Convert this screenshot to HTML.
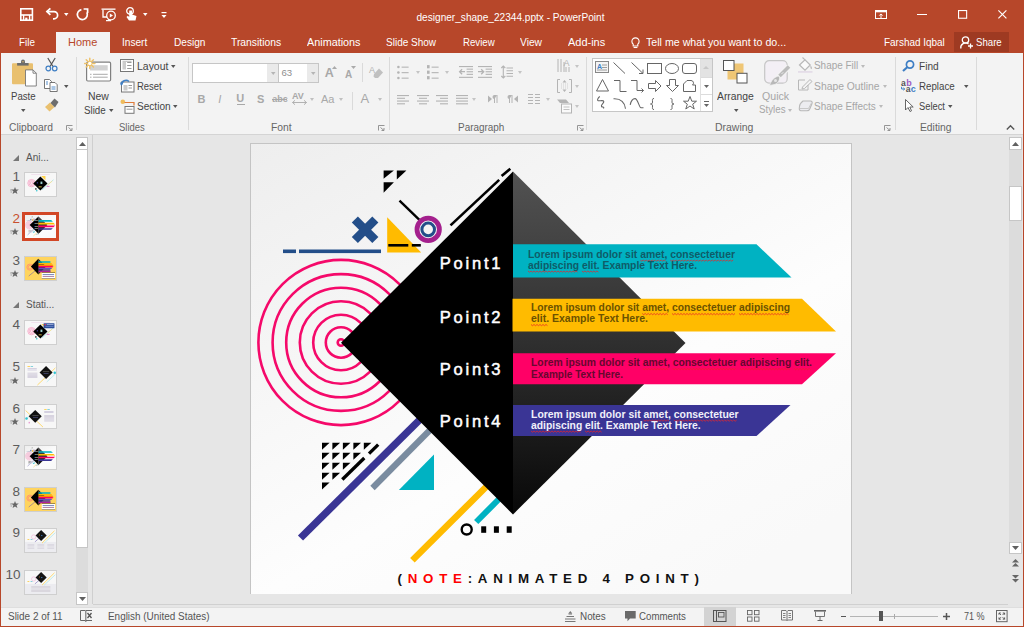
<!DOCTYPE html>
<html><head><meta charset="utf-8">
<style>
*{margin:0;padding:0;box-sizing:border-box}
html,body{width:1024px;height:627px;overflow:hidden;background:#e6e6e6;font-family:"Liberation Sans",sans-serif;position:relative}
.a{position:absolute}
.tx{white-space:nowrap}
svg{overflow:visible}
</style></head><body>
<div class="a" style="left:0px;top:0px;width:1024px;height:53px;background:#b7472a;"></div>
<div class="a tx" style="left:416.5px;top:12.36px;font-size:10.1px;line-height:11.28px;color:#fff;font-weight:normal;">designer_shape_22344.pptx - PowerPoint</div>
<svg class="a" style="left:20px;top:7.5px" width="13.5" height="13" viewBox="0 0 13.5 13"><rect x="0.8" y="0.8" width="11.6" height="11.4" fill="none" stroke="#fff" stroke-width="1.6"/><rect x="0.8" y="6.2" width="11.6" height="1.6" fill="#fff"/><path d="M3.6,7 V12 M9.6,7 V12" stroke="#fff" stroke-width="1.4"/><rect x="5.2" y="9.6" width="2.2" height="2.6" fill="#fff"/></svg>
<svg class="a" style="left:45.5px;top:8.2px" width="13" height="12" viewBox="0 0 13 12"><path d="M0.8,3.6 H8 A3.6,3.6 0 0 1 8,10.8 H7" fill="none" stroke="#fff" stroke-width="1.7"/><path d="M4.4,0.3 L0.9,3.6 L4.4,6.9" fill="none" stroke="#fff" stroke-width="1.7"/></svg>
<svg class="a" style="left:63.5px;top:12.5px" width="4.5" height="3" viewBox="0 0 4.5 3"><polygon points="0,0 4.5,0 2.25,3" fill="#fff"/></svg>
<svg class="a" style="left:76px;top:7.5px" width="13" height="12.5" viewBox="0 0 13 12.5"><path d="M5.4,1.6 A5,5 0 1 0 10.9,4.4" fill="none" stroke="#fff" stroke-width="1.7"/><path d="M7.6,1 H11.6 V5" fill="none" stroke="#fff" stroke-width="1.7"/></svg>
<svg class="a" style="left:101px;top:7.5px" width="16" height="14" viewBox="0 0 16 14"><rect x="0.5" y="0.5" width="14" height="1.3" fill="#fff"/><path d="M2,2 V9 H6" fill="none" stroke="#fff" stroke-width="1.3"/><circle cx="10" cy="7.5" r="4.3" fill="none" stroke="#fff" stroke-width="1.3"/><path d="M8.8,5.4 L12,7.5 L8.8,9.6 Z" fill="#fff"/><path d="M5,12.7 H10 M7.5,11 V13" stroke="#fff" stroke-width="1.2"/></svg>
<svg class="a" style="left:124.5px;top:7px" width="12" height="14" viewBox="0 0 12 14"><circle cx="5" cy="4" r="3.3" fill="none" stroke="#fff" stroke-width="1.3"/><path d="M4.2,3.5 V10 L2.8,8.8 L1.5,10 L4,13.5 H10.5 L11.5,9 L7,7.5 V3.5 Z" fill="#fff"/></svg>
<svg class="a" style="left:143px;top:12.5px" width="4.5" height="3" viewBox="0 0 4.5 3"><polygon points="0,0 4.5,0 2.25,3" fill="#fff"/></svg>
<svg class="a" style="left:160.5px;top:12px" width="6" height="7" viewBox="0 0 6 7"><rect x="0.5" y="0" width="5" height="1.2" fill="#fff"/><polygon points="0.5,3 5.5,3 3,6" fill="#fff"/></svg>
<svg class="a" style="left:875px;top:9.8px" width="12" height="9" viewBox="0 0 12 9"><rect x="0.5" y="0.5" width="11" height="8" fill="none" stroke="#fff" stroke-width="1"/><rect x="0.5" y="0.5" width="11" height="1.8" fill="#fff"/><path d="M6,8 V4 M4.3,5.6 L6,3.9 L7.7,5.6" fill="none" stroke="#fff" stroke-width="1"/></svg>
<div class="a" style="left:916.5px;top:13.6px;width:10.5px;height:1.1px;background:#fff;"></div>
<svg class="a" style="left:957.7px;top:9.8px" width="9.2" height="8.8" viewBox="0 0 9.2 8.8"><rect x="0.55" y="0.55" width="8.1" height="7.7" fill="none" stroke="#fff" stroke-width="1.1"/></svg>
<svg class="a" style="left:998.3px;top:9.8px" width="8.8" height="8.8" viewBox="0 0 8.8 8.8"><path d="M0.4,0.4 L8.4,8.4 M8.4,0.4 L0.4,8.4" stroke="#fff" stroke-width="1.15"/></svg>
<div class="a" style="left:56px;top:32px;width:53.5px;height:21px;background:#f3f3f3;"></div>
<div class="a tx" style="left:18.6px;top:36.98px;font-size:10.3px;line-height:11.51px;color:#fff;font-weight:normal;transform-origin:0 0;transform:scaleX(0.9582)">File</div>
<div class="a tx" style="left:67.9px;top:36.98px;font-size:10.3px;line-height:11.51px;color:#b7472a;font-weight:normal;transform-origin:0 0;transform:scaleX(1.0667)">Home</div>
<div class="a tx" style="left:122.4px;top:36.98px;font-size:10.3px;line-height:11.51px;color:#fff;font-weight:normal;transform-origin:0 0;transform:scaleX(0.9819)">Insert</div>
<div class="a tx" style="left:173.7px;top:36.98px;font-size:10.3px;line-height:11.51px;color:#fff;font-weight:normal;transform-origin:0 0;transform:scaleX(0.9825)">Design</div>
<div class="a tx" style="left:231.2px;top:36.98px;font-size:10.3px;line-height:11.51px;color:#fff;font-weight:normal;transform-origin:0 0;transform:scaleX(1.0023)">Transitions</div>
<div class="a tx" style="left:307.2px;top:36.98px;font-size:10.3px;line-height:11.51px;color:#fff;font-weight:normal;transform-origin:0 0;transform:scaleX(1.0503)">Animations</div>
<div class="a tx" style="left:386.4px;top:36.98px;font-size:10.3px;line-height:11.51px;color:#fff;font-weight:normal;transform-origin:0 0;transform:scaleX(0.9725)">Slide Show</div>
<div class="a tx" style="left:462.6px;top:36.98px;font-size:10.3px;line-height:11.51px;color:#fff;font-weight:normal;transform-origin:0 0;transform:scaleX(0.9388)">Review</div>
<div class="a tx" style="left:520px;top:36.98px;font-size:10.3px;line-height:11.51px;color:#fff;font-weight:normal;transform-origin:0 0;transform:scaleX(0.9936)">View</div>
<div class="a tx" style="left:567.8px;top:36.98px;font-size:10.3px;line-height:11.51px;color:#fff;font-weight:normal;transform-origin:0 0;transform:scaleX(1.0652)">Add-ins</div>
<svg class="a" style="left:631px;top:35.5px" width="9" height="13" viewBox="0 0 9 13"><path d="M2.2,8.2 A3.6,3.6 0 1 1 6.8,8.2 V10 H2.2 Z" fill="none" stroke="#fff" stroke-width="1.1"/><path d="M2.6,11.5 H6.4" stroke="#fff" stroke-width="1.1"/></svg>
<div class="a tx" style="left:646.4px;top:36.98px;font-size:10.3px;line-height:11.51px;color:#fff;font-weight:normal;transform-origin:0 0;transform:scaleX(1.0328)">Tell me what you want to do...</div>
<div class="a tx" style="left:883.5px;top:36.98px;font-size:10.3px;line-height:11.51px;color:#fff;font-weight:normal;transform-origin:0 0;transform:scaleX(0.9656)">Farshad Iqbal</div>
<div class="a" style="left:954px;top:31.6px;width:54.6px;height:20.5px;background:#9e3a22;"></div>
<svg class="a" style="left:960px;top:36px" width="14" height="13" viewBox="0 0 14 13"><circle cx="5.5" cy="4" r="3.2" fill="none" stroke="#fff" stroke-width="1.3"/><path d="M0.8,12.5 A4.8,4.8 0 0 1 8.5,8" fill="none" stroke="#fff" stroke-width="1.3"/><path d="M10.5,7.5 V12.5 M8,10 H13" stroke="#fff" stroke-width="1.3"/></svg>
<div class="a tx" style="left:976.2px;top:36.98px;font-size:10.3px;line-height:11.51px;color:#fff;font-weight:normal;transform-origin:0 0;transform:scaleX(0.9351)">Share</div>
<div class="a" style="left:0px;top:53px;width:1024px;height:81px;background:#f3f3f3;"></div>
<div class="a" style="left:0px;top:134px;width:1024px;height:1px;background:#d4d4d4;"></div>
<div class="a" style="left:0px;top:53px;width:1px;height:574px;background:#b7472a;"></div>
<div class="a" style="left:1022.5px;top:53px;width:1.5px;height:574px;background:#b7472a;"></div>
<div class="a" style="left:76px;top:57px;width:1px;height:73px;background:#dadada;"></div>
<div class="a" style="left:188px;top:57px;width:1px;height:73px;background:#dadada;"></div>
<div class="a" style="left:389px;top:57px;width:1px;height:73px;background:#dadada;"></div>
<div class="a" style="left:586px;top:57px;width:1px;height:73px;background:#dadada;"></div>
<div class="a" style="left:894.5px;top:57px;width:1px;height:73px;background:#dadada;"></div>
<div class="a" style="left:975.5px;top:57px;width:1px;height:73px;background:#dadada;"></div>
<div class="a tx" style="left:9.3px;top:121.55px;font-size:10px;line-height:11.17px;color:#666;font-weight:normal;transform-origin:0 0;transform:scaleX(1.0254)">Clipboard</div>
<svg class="a" style="left:66px;top:124.5px" width="7" height="6" viewBox="0 0 7 6"><path d="M0.5,5.5 V0.5 H6.5" fill="none" stroke="#8a8a8a" stroke-width="0.9"/><path d="M2.5,2.5 L6,5.5 M6,3 V5.5 H3.5" fill="none" stroke="#8a8a8a" stroke-width="0.9"/></svg>
<div class="a tx" style="left:119.3px;top:121.55px;font-size:10px;line-height:11.17px;color:#666;font-weight:normal;transform-origin:0 0;transform:scaleX(0.9468)">Slides</div>
<div class="a tx" style="left:270.8px;top:121.55px;font-size:10px;line-height:11.17px;color:#666;font-weight:normal;transform-origin:0 0;transform:scaleX(1.0342)">Font</div>
<svg class="a" style="left:378.3px;top:124.5px" width="7" height="6" viewBox="0 0 7 6"><path d="M0.5,5.5 V0.5 H6.5" fill="none" stroke="#8a8a8a" stroke-width="0.9"/><path d="M2.5,2.5 L6,5.5 M6,3 V5.5 H3.5" fill="none" stroke="#8a8a8a" stroke-width="0.9"/></svg>
<div class="a tx" style="left:458px;top:121.55px;font-size:10px;line-height:11.17px;color:#666;font-weight:normal;transform-origin:0 0;transform:scaleX(0.9935)">Paragraph</div>
<svg class="a" style="left:576.5px;top:124.5px" width="7" height="6" viewBox="0 0 7 6"><path d="M0.5,5.5 V0.5 H6.5" fill="none" stroke="#8a8a8a" stroke-width="0.9"/><path d="M2.5,2.5 L6,5.5 M6,3 V5.5 H3.5" fill="none" stroke="#8a8a8a" stroke-width="0.9"/></svg>
<div class="a tx" style="left:714.6px;top:121.55px;font-size:10px;line-height:11.17px;color:#666;font-weight:normal;transform-origin:0 0;transform:scaleX(1.0467)">Drawing</div>
<svg class="a" style="left:884.4px;top:124.5px" width="7" height="6" viewBox="0 0 7 6"><path d="M0.5,5.5 V0.5 H6.5" fill="none" stroke="#8a8a8a" stroke-width="0.9"/><path d="M2.5,2.5 L6,5.5 M6,3 V5.5 H3.5" fill="none" stroke="#8a8a8a" stroke-width="0.9"/></svg>
<div class="a tx" style="left:919.5px;top:121.55px;font-size:10px;line-height:11.17px;color:#666;font-weight:normal;transform-origin:0 0;transform:scaleX(1.0301)">Editing</div>
<svg class="a" style="left:1006px;top:124.5px" width="9" height="5" viewBox="0 0 9 5"><path d="M0.8,4.5 L4.5,0.8 L8.2,4.5" fill="none" stroke="#555" stroke-width="1.4"/></svg>
<svg class="a" style="left:12px;top:60px" width="25" height="27" viewBox="0 0 25 27"><rect x="0" y="3.3" width="21" height="21" rx="1" fill="#e9c06f"/><rect x="5.1" y="3" width="11.5" height="2.6" fill="#6d6d6d"/><path d="M9,3.2 V1.5 A2,2 0 0 1 13,1.5 V3.2 Z" fill="#6d6d6d"/><circle cx="11" cy="1.8" r="0.7" fill="#e9c06f"/><path d="M13.5,9.9 H21 L24.3,13.2 V26 H13.5 Z" fill="#fff" stroke="#777" stroke-width="0.9"/><path d="M21,9.9 V13.2 H24.3" fill="none" stroke="#777" stroke-width="0.9"/></svg>
<div class="a tx" style="left:10.9px;top:90.55px;font-size:10px;line-height:11.17px;color:#444;font-weight:normal;transform-origin:0 0;transform:scaleX(0.9618)">Paste</div>
<svg class="a" style="left:20.5px;top:108.5px" width="4.5" height="3" viewBox="0 0 4.5 3"><polygon points="0,0 4.5,0 2.25,3" fill="#555"/></svg>
<svg class="a" style="left:45px;top:58px" width="13" height="14" viewBox="0 0 13 14"><path d="M2.8,0 L8,8.5 M10.2,0 L5,8.5" stroke="#555" stroke-width="1.2"/><circle cx="3.3" cy="10.5" r="2.3" fill="none" stroke="#3f7fc4" stroke-width="1.2"/><circle cx="9.7" cy="10.5" r="2.3" fill="none" stroke="#3f7fc4" stroke-width="1.2"/></svg>
<svg class="a" style="left:44px;top:79px" width="14" height="13" viewBox="0 0 14 13"><path d="M0.5,0.5 H5.5 L7.5,2.5 V9.5 H0.5 Z" fill="#fff" stroke="#666" stroke-width="0.9"/><path d="M6,3.5 H11 L13.2,5.7 V12.5 H6 Z" fill="#fff" stroke="#666" stroke-width="0.9"/><path d="M2,3 H4 M2,5 H4 M7.5,8 H11.5 M7.5,10 H11.5" stroke="#3f7fc4" stroke-width="0.9"/></svg>
<svg class="a" style="left:63.5px;top:85px" width="4.5" height="3" viewBox="0 0 4.5 3"><polygon points="0,0 4.5,0 2.25,3" fill="#555"/></svg>
<svg class="a" style="left:44px;top:99px" width="15" height="13" viewBox="0 0 15 13"><path d="M1,8 L6,3.5 L10.5,8 L5.5,12.5 Z" fill="#e9c06f"/><path d="M6.5,4 L11,8.5 L14.5,3 L10.5,-0.5 Z" fill="#6d6d6d"/></svg>
<svg class="a" style="left:86px;top:58px" width="26" height="24" viewBox="0 0 26 24"><rect x="0.6" y="4.2" width="24" height="18.8" rx="1.2" fill="#fff" stroke="#808080" stroke-width="1.2"/><rect x="4" y="7.2" width="17.7" height="5.3" fill="#d2d2d2"/><path d="M4,16.3 H5.5 M7,16.3 H21.7 M4,19.2 H5.5 M7,19.2 H21.7" stroke="#a0a0a0" stroke-width="0.9"/><g stroke="#eec26a" stroke-width="1.5" stroke-linecap="round"><path d="M3.8,0.3 V10.5 M-1.3,5.4 H8.9 M0.2,1.8 L7.4,9 M7.4,1.8 L0.2,9"/></g><circle cx="3.8" cy="5.4" r="1.7" fill="#fff"/></svg>
<div class="a tx" style="left:88.2px;top:90.55px;font-size:10px;line-height:11.17px;color:#444;font-weight:normal;transform-origin:0 0;transform:scaleX(1.0442)">New</div>
<div class="a tx" style="left:84px;top:104.55px;font-size:10px;line-height:11.17px;color:#444;font-weight:normal;transform-origin:0 0;transform:scaleX(0.9753)">Slide</div>
<svg class="a" style="left:108.5px;top:109px" width="4.5" height="3" viewBox="0 0 4.5 3"><polygon points="0,0 4.5,0 2.25,3" fill="#555"/></svg>
<svg class="a" style="left:120px;top:59px" width="14" height="13" viewBox="0 0 14 13"><rect x="0.5" y="0.5" width="13" height="12" fill="#fff" stroke="#777" stroke-width="1"/><rect x="2.5" y="3" width="3.5" height="7.5" fill="#ccc"/><path d="M7.2,3.5 H11.5 M7.2,6.5 H11.5 M7.2,9.5 H11.5" stroke="#999" stroke-width="1"/><rect x="2.5" y="1.8" width="9" height="1" fill="#bbb"/></svg>
<div class="a tx" style="left:136.9px;top:60.95px;font-size:10px;line-height:11.17px;color:#444;font-weight:normal;transform-origin:0 0;transform:scaleX(1.0456)">Layout</div>
<svg class="a" style="left:170.9px;top:64.5px" width="4.5" height="3" viewBox="0 0 4.5 3"><polygon points="0,0 4.5,0 2.25,3" fill="#555"/></svg>
<svg class="a" style="left:119.5px;top:78.5px" width="15" height="14" viewBox="0 0 15 14"><rect x="1.5" y="3" width="12.5" height="10" fill="#fff" stroke="#777" stroke-width="1"/><rect x="3.5" y="6" width="4" height="5.5" fill="#ccc"/><path d="M8.5,6.5 H12 M8.5,9 H12" stroke="#999" stroke-width="1"/><path d="M1.5,6 A4.5,4.5 0 0 1 9,2.5" fill="none" stroke="#3f7fc4" stroke-width="1.5"/><polygon points="0,3.5 3.5,3.5 1.2,7" fill="#3f7fc4"/></svg>
<div class="a tx" style="left:136.9px;top:80.95px;font-size:10px;line-height:11.17px;color:#444;font-weight:normal;transform-origin:0 0;transform:scaleX(0.9455)">Reset</div>
<svg class="a" style="left:119.5px;top:98.5px" width="15" height="15" viewBox="0 0 15 15"><circle cx="2.8" cy="2.8" r="2.3" fill="#efbd5c"/><path d="M4.5,3.5 H14 V6.5" fill="none" stroke="#e07b39" stroke-width="1.2"/><rect x="5" y="7.5" width="9" height="6.8" fill="#fff" stroke="#777" stroke-width="1"/><path d="M6.5,10.2 H12.5" stroke="#999" stroke-width="1"/></svg>
<div class="a tx" style="left:136.9px;top:101.15px;font-size:10px;line-height:11.17px;color:#444;font-weight:normal;transform-origin:0 0;transform:scaleX(1.0072)">Section</div>
<svg class="a" style="left:173.3px;top:105px" width="4.5" height="3" viewBox="0 0 4.5 3"><polygon points="0,0 4.5,0 2.25,3" fill="#555"/></svg>
<div class="a" style="left:192.3px;top:62.8px;width:126.3px;height:19.8px;background:#fff;border:1px solid #c6c6c6"></div>
<div class="a" style="left:267px;top:63.8px;width:11.3px;height:17.8px;background:#eaeaea;"></div>
<div class="a" style="left:307.3px;top:63.8px;width:10.3px;height:17.8px;background:#eaeaea;"></div>
<div class="a" style="left:278.3px;top:62.8px;width:1px;height:19.8px;background:#c6c6c6;"></div>
<svg class="a" style="left:270.5px;top:71.5px" width="4.5" height="3" viewBox="0 0 4.5 3"><polygon points="0,0 4.5,0 2.25,3" fill="#b5b5b5"/></svg>
<svg class="a" style="left:310.5px;top:71.5px" width="4.5" height="3" viewBox="0 0 4.5 3"><polygon points="0,0 4.5,0 2.25,3" fill="#b5b5b5"/></svg>
<div class="a tx" style="left:281.5px;top:67.81px;font-size:9.6px;line-height:10.72px;color:#8f8f8f;font-weight:normal;">63</div>
<div class="a tx" style="left:324.8px;top:67.29px;font-size:12.5px;line-height:13.96px;color:#a8a8a8;font-weight:bold;">A</div>
<svg class="a" style="left:331.8px;top:66px" width="5" height="3" viewBox="0 0 5 3"><polygon points="0,3 5,3 2.5,0" fill="#aaa"/></svg>
<div class="a tx" style="left:345px;top:69.35px;font-size:10px;line-height:11.17px;color:#a8a8a8;font-weight:bold;">A</div>
<svg class="a" style="left:351.2px;top:65.8px" width="5" height="3" viewBox="0 0 5 3"><polygon points="0,0 5,0 2.5,3" fill="#aaa"/></svg>
<div class="a" style="left:361.5px;top:63px;width:1px;height:18.5px;background:#dadada;"></div>
<svg class="a" style="left:369px;top:65px" width="14" height="13" viewBox="0 0 14 13"><text x="0" y="8" font-family="Liberation Sans" font-size="9" fill="#b0b0b0">A</text><path d="M5,9 L10,3.5 L14,7.5 L9,13 H6 L4.5,11.5 Z" fill="#c0c0c0"/></svg>
<div class="a tx" style="left:197.5px;top:93.25px;font-size:11px;line-height:12.29px;color:#a8a8a8;font-weight:bold;">B</div>
<div class="a tx" style="left:218.2px;top:93.25px;font-size:11px;line-height:12.29px;color:#a8a8a8;font-weight:normal;font-style:italic">I</div>
<div class="a tx" style="left:236.2px;top:92.34px;font-size:11px;line-height:12.29px;color:#a8a8a8;font-weight:bold;">U</div>
<div class="a" style="left:236.5px;top:103.5px;width:8px;height:1px;background:#a8a8a8;"></div>
<div class="a tx" style="left:257px;top:93.25px;font-size:11px;line-height:12.29px;color:#a8a8a8;font-weight:bold;">S</div>
<div class="a tx" style="left:272.2px;top:93.86px;font-size:9px;line-height:10.05px;color:#a8a8a8;font-weight:bold;">abc</div>
<div class="a" style="left:272px;top:98.5px;width:14.5px;height:0.9px;background:#a8a8a8;"></div>
<div class="a tx" style="left:292px;top:90.86px;font-size:9px;line-height:10.05px;color:#a8a8a8;font-weight:bold;">AV</div>
<svg class="a" style="left:292px;top:100px" width="15" height="5" viewBox="0 0 15 5"><path d="M0.5,2.5 H14.5 M3,0.3 L0.5,2.5 L3,4.7 M12,0.3 L14.5,2.5 L12,4.7" fill="none" stroke="#aaa" stroke-width="0.9"/></svg>
<svg class="a" style="left:310px;top:98px" width="4" height="3" viewBox="0 0 4 3"><polygon points="0,0 4,0 2.0,3" fill="#c0c0c0"/></svg>
<div class="a tx" style="left:321px;top:93.05px;font-size:11px;line-height:12.29px;color:#a8a8a8;font-weight:normal;">Aa</div>
<svg class="a" style="left:339px;top:98px" width="4" height="3" viewBox="0 0 4 3"><polygon points="0,0 4,0 2.0,3" fill="#c0c0c0"/></svg>
<div class="a" style="left:351.5px;top:91.5px;width:1px;height:18px;background:#dadada;"></div>
<div class="a tx" style="left:360.5px;top:92.23px;font-size:13px;line-height:14.52px;color:#a8a8a8;font-weight:normal;">A</div>
<svg class="a" style="left:377.5px;top:98px" width="4" height="3" viewBox="0 0 4 3"><polygon points="0,0 4,0 2.0,3" fill="#c0c0c0"/></svg>
<svg class="a" style="left:396.5px;top:65.6px" width="13" height="13" viewBox="0 0 13 13"><circle cx="1.4" cy="1.0" r="1.3" fill="#b4b4b4"/><rect x="4.6" y="0.6" width="7" height="1.1" fill="#b4b4b4"/><circle cx="1.4" cy="6.5" r="1.3" fill="#b4b4b4"/><rect x="4.6" y="6.1" width="7" height="1.1" fill="#b4b4b4"/><circle cx="1.4" cy="12.0" r="1.3" fill="#b4b4b4"/><rect x="4.6" y="11.6" width="7" height="1.1" fill="#b4b4b4"/></svg>
<svg class="a" style="left:415.5px;top:71px" width="4" height="3" viewBox="0 0 4 3"><polygon points="0,0 4,0 2.0,3" fill="#c4c4c4"/></svg>
<svg class="a" style="left:426.8px;top:65.6px" width="13" height="13" viewBox="0 0 13 13"><rect x="0" y="-0.9" width="2.6" height="3.2" fill="#b4b4b4"/><rect x="4.6" y="0.6" width="7" height="1.1" fill="#b4b4b4"/><rect x="0" y="4.6" width="2.6" height="3.2" fill="#b4b4b4"/><rect x="4.6" y="6.1" width="7" height="1.1" fill="#b4b4b4"/><rect x="0" y="10.1" width="2.6" height="3.2" fill="#b4b4b4"/><rect x="4.6" y="11.6" width="7" height="1.1" fill="#b4b4b4"/></svg>
<svg class="a" style="left:445px;top:71px" width="4" height="3" viewBox="0 0 4 3"><polygon points="0,0 4,0 2.0,3" fill="#c4c4c4"/></svg>
<svg class="a" style="left:458.7px;top:65.8px" width="14" height="12" viewBox="0 0 14 12"><rect x="0" y="0" width="14" height="1.1" fill="#b4b4b4"/><rect x="0" y="10.8" width="14" height="1.1" fill="#b4b4b4"/><rect x="7.6" y="2.6" width="6.4" height="1.1" fill="#b4b4b4"/><rect x="7.6" y="5.2" width="6.4" height="1.1" fill="#b4b4b4"/><rect x="7.6" y="7.8" width="6.4" height="1.1" fill="#b4b4b4"/><path d="M6,5.7 H0.6 M3.1,3.2 L0.6,5.7 L3.1,8.2" fill="none" stroke="#b4b4b4" stroke-width="1.3"/></svg>
<svg class="a" style="left:477.8px;top:65.8px" width="14" height="12" viewBox="0 0 14 12"><rect x="0" y="0" width="14" height="1.1" fill="#b4b4b4"/><rect x="0" y="10.8" width="14" height="1.1" fill="#b4b4b4"/><rect x="7.6" y="2.6" width="6.4" height="1.1" fill="#b4b4b4"/><rect x="7.6" y="5.2" width="6.4" height="1.1" fill="#b4b4b4"/><rect x="7.6" y="7.8" width="6.4" height="1.1" fill="#b4b4b4"/><path d="M0,5.7 H5.5 M3.2,3.2 L5.7,5.7 L3.2,8.2" fill="none" stroke="#b4b4b4" stroke-width="1.3"/></svg>
<svg class="a" style="left:500.8px;top:65px" width="13" height="14" viewBox="0 0 13 14"><path d="M2.3,1 V13 M0.3,3 L2.3,1 L4.3,3 M0.3,11 L2.3,13 L4.3,11" fill="none" stroke="#b4b4b4" stroke-width="1.1"/><path d="M5.5,3 H12 M5.5,5.8 H12 M5.5,8.5 H12 M5.5,11.2 H12" stroke="#b4b4b4" stroke-width="1.1"/></svg>
<svg class="a" style="left:518px;top:71px" width="4" height="3" viewBox="0 0 4 3"><polygon points="0,0 4,0 2.0,3" fill="#c4c4c4"/></svg>
<svg class="a" style="left:556.5px;top:58px" width="14" height="15" viewBox="0 0 14 15"><path d="M1,1 V14 M4,1 V14 M7,4 V14" stroke="#b4b4b4" stroke-width="1"/><text x="6.5" y="8" font-family="Liberation Sans" font-size="9" fill="#b4b4b4">A</text><path d="M9,9 V14 M12,9 V14" stroke="#b4b4b4" stroke-width="1"/></svg>
<svg class="a" style="left:574.5px;top:65px" width="4" height="3" viewBox="0 0 4 3"><polygon points="0,0 4,0 2.0,3" fill="#c4c4c4"/></svg>
<svg class="a" style="left:556.5px;top:78.5px" width="15" height="14" viewBox="0 0 15 14"><path d="M3,0.5 H0.5 V13.5 H3 M12,0.5 H14.5 V13.5 H12" fill="none" stroke="#b4b4b4" stroke-width="1"/><path d="M4,5 H11 M4,7 H11 M4,9 H11" stroke="#c8c8c8" stroke-width="0.8" stroke-dasharray="1,1"/><polygon points="5.5,3.5 9.5,3.5 7.5,1" fill="#b4b4b4"/><polygon points="5.5,10.5 9.5,10.5 7.5,13" fill="#b4b4b4"/></svg>
<svg class="a" style="left:574.5px;top:85px" width="4" height="3" viewBox="0 0 4 3"><polygon points="0,0 4,0 2.0,3" fill="#c4c4c4"/></svg>
<svg class="a" style="left:556.5px;top:98.5px" width="15" height="15" viewBox="0 0 15 15"><polygon points="0,0.5 9,0.5 12,4 3,4" fill="#b4b4b4"/><rect x="4.5" y="5" width="10" height="9" fill="#fafafa" stroke="#b4b4b4" stroke-width="1"/><path d="M6.5,8 H12.5 M6.5,10.5 H12.5" stroke="#b4b4b4" stroke-width="0.8"/></svg>
<svg class="a" style="left:574.5px;top:105px" width="4" height="3" viewBox="0 0 4 3"><polygon points="0,0 4,0 2.0,3" fill="#c4c4c4"/></svg>
<svg class="a" style="left:397px;top:95px" width="13" height="11" viewBox="0 0 13 11"><rect x="0" y="0.0" width="12" height="1.1" fill="#b4b4b4"/><rect x="0" y="2.75" width="8" height="1.1" fill="#b4b4b4"/><rect x="0" y="5.5" width="12" height="1.1" fill="#b4b4b4"/><rect x="0" y="8.25" width="8" height="1.1" fill="#b4b4b4"/></svg>
<svg class="a" style="left:416.5px;top:95px" width="13" height="11" viewBox="0 0 13 11"><rect x="0.0" y="0.0" width="12" height="1.1" fill="#b4b4b4"/><rect x="2.0" y="2.75" width="8" height="1.1" fill="#b4b4b4"/><rect x="0.0" y="5.5" width="12" height="1.1" fill="#b4b4b4"/><rect x="2.0" y="8.25" width="8" height="1.1" fill="#b4b4b4"/></svg>
<svg class="a" style="left:436px;top:95px" width="13" height="11" viewBox="0 0 13 11"><rect x="0" y="0.0" width="12" height="1.1" fill="#b4b4b4"/><rect x="4" y="2.75" width="8" height="1.1" fill="#b4b4b4"/><rect x="0" y="5.5" width="12" height="1.1" fill="#b4b4b4"/><rect x="4" y="8.25" width="8" height="1.1" fill="#b4b4b4"/></svg>
<svg class="a" style="left:455.5px;top:95px" width="13" height="11" viewBox="0 0 13 11"><rect x="0" y="0.0" width="12" height="1.1" fill="#b4b4b4"/><rect x="0" y="2.75" width="12" height="1.1" fill="#b4b4b4"/><rect x="0" y="5.5" width="12" height="1.1" fill="#b4b4b4"/><rect x="0" y="8.25" width="12" height="1.1" fill="#b4b4b4"/></svg>
<svg class="a" style="left:471.5px;top:98px" width="4" height="3" viewBox="0 0 4 3"><polygon points="0,0 4,0 2.0,3" fill="#c4c4c4"/></svg>
<svg class="a" style="left:487.5px;top:94px" width="11" height="10" viewBox="0 0 11 10"><polygon points="0,1.5 4,5 0,8.5" fill="#b4b4b4"/><path d="M6.5,1 V9 M9,1 V9" stroke="#b4b4b4" stroke-width="1"/><path d="M9,1 H6.5 A2,2 0 0 0 6.5,5 Z" fill="#b4b4b4"/></svg>
<svg class="a" style="left:506.5px;top:94px" width="11" height="10" viewBox="0 0 11 10"><polygon points="11,1.5 7,5 11,8.5" fill="#b4b4b4"/><path d="M2.5,1 V9 M5,1 V9" stroke="#b4b4b4" stroke-width="1"/><path d="M5,1 H2.5 A2,2 0 0 0 2.5,5 Z" fill="#b4b4b4"/></svg>
<svg class="a" style="left:528px;top:94px" width="12" height="10" viewBox="0 0 12 10"><path d="M0,0.5 H5 M0,3.5 H5 M0,6.5 H5 M0,9.5 H5 M7,0.5 H12 M7,3.5 H12 M7,6.5 H12 M7,9.5 H12" stroke="#b4b4b4" stroke-width="1"/></svg>
<svg class="a" style="left:545.5px;top:98px" width="4" height="3" viewBox="0 0 4 3"><polygon points="0,0 4,0 2.0,3" fill="#c4c4c4"/></svg>
<div class="a" style="left:592px;top:58.3px;width:120.5px;height:54px;background:#fff;border:1px solid #c6c6c6"></div>
<div class="a" style="left:700px;top:59.3px;width:11.5px;height:17.5px;background:#e3e3e3;"></div>
<div class="a" style="left:700px;top:77px;width:11.5px;height:1px;background:#dcdcdc;"></div>
<div class="a" style="left:700px;top:94px;width:11.5px;height:1px;background:#dcdcdc;"></div>
<div class="a" style="left:699.5px;top:59.3px;width:1px;height:52px;background:#e0e0e0;"></div>
<svg class="a" style="left:703px;top:66px" width="6" height="3" viewBox="0 0 6 3"><polygon points="0,3 6,3 3,0" fill="#c8c8c8"/></svg>
<svg class="a" style="left:703.5px;top:85px" width="5" height="3" viewBox="0 0 5 3"><polygon points="0,0 5,0 2.5,3" fill="#666"/></svg>
<svg class="a" style="left:703.5px;top:101px" width="5" height="7" viewBox="0 0 5 7"><rect x="0" y="0" width="5" height="1" fill="#666"/><polygon points="0,3 5,3 2.5,6" fill="#666"/></svg>
<svg class="a" style="left:594.5px;top:61px" width="15" height="14" viewBox="0 0 15 14"><rect x="0.5" y="0.5" width="13" height="11" fill="#f4f4f4" stroke="#888" stroke-width="1"/><text x="2" y="7.5" font-family="Liberation Sans" font-size="7" font-weight="bold" fill="#3f7fc4">A</text><path d="M7,4 H12 M7,6.5 H12 M2,9 H12" stroke="#888" stroke-width="0.8"/></svg>
<svg class="a" style="left:613px;top:61.5px" width="15" height="14" viewBox="0 0 15 14"><path d="M0.5,0.5 L12,11.5" stroke="#666" stroke-width="1"/></svg>
<svg class="a" style="left:630.5px;top:61.5px" width="15" height="14" viewBox="0 0 15 14"><path d="M0.5,0.5 L12,11.5 M12,7.5 V11.5 H8" fill="none" stroke="#666" stroke-width="1"/></svg>
<svg class="a" style="left:647px;top:62.5px" width="15" height="14" viewBox="0 0 15 14"><rect x="0.5" y="0.5" width="14" height="10" fill="none" stroke="#666" stroke-width="1"/></svg>
<svg class="a" style="left:665px;top:62.5px" width="15" height="14" viewBox="0 0 15 14"><ellipse cx="7" cy="5.5" rx="6.5" ry="5" fill="none" stroke="#666" stroke-width="1"/></svg>
<svg class="a" style="left:682px;top:62.5px" width="15" height="14" viewBox="0 0 15 14"><rect x="0.5" y="0.5" width="14" height="10" rx="2.5" fill="none" stroke="#666" stroke-width="1"/></svg>
<svg class="a" style="left:595.5px;top:79px" width="15" height="14" viewBox="0 0 15 14"><polygon points="6.5,0.5 12.5,12 0.5,12" fill="none" stroke="#666" stroke-width="1"/></svg>
<svg class="a" style="left:613.5px;top:79.5px" width="15" height="14" viewBox="0 0 15 14"><path d="M0,0.5 H6 V11.5 H12.5" fill="none" stroke="#666" stroke-width="1"/></svg>
<svg class="a" style="left:630.5px;top:79.5px" width="15" height="14" viewBox="0 0 15 14"><path d="M0,0.5 H6 V10.5 H12.5 M10.5,8.5 L12.5,10.5 L10.5,12.5" fill="none" stroke="#666" stroke-width="1"/></svg>
<svg class="a" style="left:647.5px;top:79.5px" width="15" height="14" viewBox="0 0 15 14"><polygon points="0.5,3.5 7.5,3.5 7.5,0.5 13,6 7.5,11.5 7.5,8.5 0.5,8.5" fill="none" stroke="#666" stroke-width="1"/></svg>
<svg class="a" style="left:665.5px;top:79px" width="15" height="14" viewBox="0 0 15 14"><polygon points="3.5,0.5 9.5,0.5 9.5,6.5 12.5,6.5 6.5,12.5 0.5,6.5 3.5,6.5" fill="none" stroke="#666" stroke-width="1"/></svg>
<svg class="a" style="left:683px;top:79.5px" width="15" height="14" viewBox="0 0 15 14"><path d="M0.5,11.5 V4 L4,0.5 H8 A2.5,2.5 0 0 1 9.5,5 L12.5,5 V11.5 Z" fill="none" stroke="#666" stroke-width="1"/></svg>
<svg class="a" style="left:596.5px;top:96px" width="15" height="14" viewBox="0 0 15 14"><path d="M2.8,0.5 C1.5,1.5 0,3.5 0.8,4.5 C2,5.5 6.5,3.5 6.8,5.5 C7,7.5 3.5,8.5 4.5,10.5 C5.5,11.5 7.5,10.5 6.5,12.5" fill="none" stroke="#666" stroke-width="1.1"/></svg>
<svg class="a" style="left:613px;top:97.5px" width="15" height="14" viewBox="0 0 15 14"><path d="M0.5,0.8 C6,0.5 11.5,3 12.5,10.8" fill="none" stroke="#666" stroke-width="1.1"/></svg>
<svg class="a" style="left:630px;top:97.5px" width="15" height="14" viewBox="0 0 15 14"><path d="M0.2,6.8 C1,3 3,0.6 5,0.6 C8,0.6 9,9.8 11,9.8 H13.5" fill="none" stroke="#666" stroke-width="1.1"/></svg>
<svg class="a" style="left:650px;top:97.5px" width="15" height="14" viewBox="0 0 15 14"><path d="M4,0.5 C2,0.5 2.5,1.5 2.5,4 C2.5,5.5 2,6 0.5,6 C2,6 2.5,6.5 2.5,8 C2.5,10.5 2,11.5 4,11.5" fill="none" stroke="#666" stroke-width="1"/></svg>
<svg class="a" style="left:670px;top:97.5px" width="15" height="14" viewBox="0 0 15 14"><path d="M0.5,0.5 C2.5,0.5 2,1.5 2,4 C2,5.5 2.5,6 4,6 C2.5,6 2,6.5 2,8 C2,10.5 2.5,11.5 0.5,11.5" fill="none" stroke="#666" stroke-width="1"/></svg>
<svg class="a" style="left:682.5px;top:96px" width="15" height="14" viewBox="0 0 15 14"><polygon points="7,0.5 8.8,5.2 13.5,5.2 9.7,8.2 11.2,13 7,10 2.8,13 4.3,8.2 0.5,5.2 5.2,5.2" fill="none" stroke="#666" stroke-width="1"/></svg>
<svg class="a" style="left:722.5px;top:60px" width="25" height="24" viewBox="0 0 25 24"><rect x="4.5" y="3.5" width="16" height="16" fill="#efc675"/><rect x="0.5" y="0.5" width="10.5" height="10" fill="#fff" stroke="#555" stroke-width="1"/><rect x="14" y="13.3" width="10" height="9.7" fill="#fff" stroke="#555" stroke-width="1"/></svg>
<div class="a tx" style="left:717.4px;top:90.95px;font-size:10px;line-height:11.17px;color:#444;font-weight:normal;transform-origin:0 0;transform:scaleX(1.0343)">Arrange</div>
<svg class="a" style="left:734px;top:108.5px" width="4.5" height="3" viewBox="0 0 4.5 3"><polygon points="0,0 4.5,0 2.25,3" fill="#555"/></svg>
<svg class="a" style="left:763.5px;top:60px" width="27" height="26" viewBox="0 0 27 26"><rect x="0.7" y="0.7" width="22.5" height="22.5" rx="4.5" fill="#f3eff5" stroke="#c6c6c6" stroke-width="1.2"/><path d="M13.5,18 L25,6.5" stroke="#f3f3f3" stroke-width="6"/><path d="M15.5,16 L25,6.5" stroke="#bcbcbc" stroke-width="3.6"/><path d="M17.6,13.9 L19.2,12.3" stroke="#f3f3f3" stroke-width="1"/><path d="M5.5,25.5 C7,20.5 10.5,16.5 15,16 C16.5,18 15.5,22 11,24.5 Z" fill="#b8b8b8" stroke="#f3f3f3" stroke-width="0.8"/><circle cx="11.5" cy="20.5" r="1.5" fill="#e6e6e6"/></svg>
<div class="a tx" style="left:762.3px;top:90.95px;font-size:10px;line-height:11.17px;color:#a6a6a6;font-weight:normal;transform-origin:0 0;transform:scaleX(1.0601)">Quick</div>
<div class="a tx" style="left:758.6px;top:104.25px;font-size:10px;line-height:11.17px;color:#a6a6a6;font-weight:normal;transform-origin:0 0;transform:scaleX(0.9730)">Styles</div>
<svg class="a" style="left:788px;top:108.5px" width="4" height="3" viewBox="0 0 4 3"><polygon points="0,0 4,0 2.0,3" fill="#bbb"/></svg>
<svg class="a" style="left:797.5px;top:57.5px" width="15" height="15" viewBox="0 0 15 15"><polygon points="1.5,7 7,1.8 12.2,7 7,12.2" fill="#fafafa" stroke="#b8b8b8" stroke-width="1.2"/><path d="M7,1.8 L4.5,-0.5" stroke="#b8b8b8" stroke-width="1.1"/><path d="M12.5,7.5 C14,9 14.5,10.5 13.3,11.3 C12.2,10.5 12.4,9 12.5,7.5 Z" fill="#b8b8b8"/><rect x="0" y="13" width="14.5" height="1.8" fill="#e4dde8"/></svg>
<div class="a tx" style="left:814.3px;top:60.45px;font-size:10px;line-height:11.17px;color:#a6a6a6;font-weight:normal;transform-origin:0 0;transform:scaleX(0.9917)">Shape Fill</div>
<svg class="a" style="left:861px;top:64.5px" width="4" height="3" viewBox="0 0 4 3"><polygon points="0,0 4,0 2.0,3" fill="#bbb"/></svg>
<svg class="a" style="left:797.5px;top:78.5px" width="15" height="12" viewBox="0 0 15 12"><path d="M7,1 H0.5 V11 H10 V6" fill="none" stroke="#b8b8b8" stroke-width="1"/><path d="M4.5,8 L12,0.5 L14,2.5 L6.5,9.5 L4,10 Z" fill="none" stroke="#b8b8b8" stroke-width="1"/></svg>
<div class="a tx" style="left:814.3px;top:80.95px;font-size:10px;line-height:11.17px;color:#a6a6a6;font-weight:normal;transform-origin:0 0;transform:scaleX(1.0333)">Shape Outline</div>
<svg class="a" style="left:882.5px;top:85px" width="4" height="3" viewBox="0 0 4 3"><polygon points="0,0 4,0 2.0,3" fill="#bbb"/></svg>
<svg class="a" style="left:797.5px;top:100px" width="15" height="12" viewBox="0 0 15 12"><path d="M1.5,6.5 C1.5,5 3,2.5 5,1 H12.5 C14,1 14.5,2 14,3.5 L12,8.5 C11.5,10 10.5,10.8 9,10.8 H3 C1.5,10.8 1,9.5 1.5,6.5 Z" fill="#ececf0" stroke="#b8b8b8" stroke-width="1.1"/><path d="M2,8.5 H10.5 L13.5,3" fill="none" stroke="#c8c8c8" stroke-width="1"/></svg>
<div class="a tx" style="left:814.3px;top:101.25px;font-size:10px;line-height:11.17px;color:#a6a6a6;font-weight:normal;transform-origin:0 0;transform:scaleX(0.9937)">Shape Effects</div>
<svg class="a" style="left:878.5px;top:105px" width="4" height="3" viewBox="0 0 4 3"><polygon points="0,0 4,0 2.0,3" fill="#bbb"/></svg>
<svg class="a" style="left:901.5px;top:60px" width="13" height="11" viewBox="0 0 13 11"><circle cx="8" cy="4.5" r="3.6" fill="none" stroke="#3f7fc4" stroke-width="1.7"/><path d="M5.5,7 L1,11" stroke="#3f7fc4" stroke-width="2.2"/></svg>
<div class="a tx" style="left:918.8px;top:60.55px;font-size:10px;line-height:11.17px;color:#444;font-weight:normal;transform-origin:0 0;transform:scaleX(1.0076)">Find</div>
<svg class="a" style="left:901px;top:78px" width="16" height="15" viewBox="0 0 16 15"><text x="0" y="7.5" font-family="Liberation Sans" font-weight="bold" font-size="8.6" fill="#555">a</text><text x="5.3" y="7.5" font-family="Liberation Sans" font-weight="bold" font-size="9" fill="#9a5ac4">b</text><text x="4.8" y="13.6" font-family="Liberation Sans" font-weight="bold" font-size="8.6" fill="#555">a</text><text x="9.8" y="13.6" font-family="Liberation Sans" font-weight="bold" font-size="9" fill="#3f7fc4">c</text><path d="M0.6,8.8 V11 H3.6 M2.4,9.8 L3.7,11 L2.4,12.2" fill="none" stroke="#3f7fc4" stroke-width="1"/></svg>
<div class="a tx" style="left:918.8px;top:80.75px;font-size:10px;line-height:11.17px;color:#444;font-weight:normal;transform-origin:0 0;transform:scaleX(0.9727)">Replace</div>
<svg class="a" style="left:963.5px;top:85px" width="4.5" height="3" viewBox="0 0 4.5 3"><polygon points="0,0 4.5,0 2.25,3" fill="#555"/></svg>
<svg class="a" style="left:904.5px;top:98.5px" width="9" height="14" viewBox="0 0 9 14"><path d="M0.5,0.5 V11 L3,8.5 L5,12.5 L6.5,11.8 L4.8,8 H8.2 Z" fill="#fff" stroke="#555" stroke-width="0.9"/></svg>
<div class="a tx" style="left:918.8px;top:101.15px;font-size:10px;line-height:11.17px;color:#444;font-weight:normal;transform-origin:0 0;transform:scaleX(0.9318)">Select</div>
<svg class="a" style="left:948px;top:105px" width="4.5" height="3" viewBox="0 0 4.5 3"><polygon points="0,0 4.5,0 2.25,3" fill="#555"/></svg>
<div class="a" style="left:1px;top:135px;width:91px;height:471px;background:#e6e6e6;"></div>
<div class="a" style="left:75.5px;top:137px;width:12.5px;height:467px;background:#dcdcdc;"></div>
<div class="a" style="left:75.5px;top:137px;width:12.5px;height:12.5px;background:#fff;border:1px solid #c6c6c6"></div>
<svg class="a" style="left:78.5px;top:141.5px" width="7" height="4" viewBox="0 0 7 4"><polygon points="0,4 7,4 3.5,0" fill="#606060"/></svg>
<div class="a" style="left:75.5px;top:149px;width:12.5px;height:398.5px;background:#fff;border:1px solid #c6c6c6"></div>
<div class="a" style="left:75.5px;top:592px;width:12.5px;height:12.5px;background:#fff;border:1px solid #c6c6c6"></div>
<svg class="a" style="left:78.5px;top:596.5px" width="7" height="4" viewBox="0 0 7 4"><polygon points="0,0 7,0 3.5,4" fill="#606060"/></svg>
<div class="a" style="left:91.5px;top:135px;width:1.8px;height:469px;background:#cfcfcf;"></div>
<svg class="a" style="left:13px;top:155px" width="6" height="6" viewBox="0 0 6 6"><polygon points="6,0 6,6 0,6" fill="#777"/></svg>
<div class="a tx" style="left:26px;top:152.25px;font-size:10px;line-height:11.17px;color:#555;font-weight:normal;">Ani...</div>
<svg class="a" style="left:13px;top:302px" width="6" height="6" viewBox="0 0 6 6"><polygon points="6,0 6,6 0,6" fill="#777"/></svg>
<div class="a tx" style="left:26px;top:299.45px;font-size:10px;line-height:11.17px;color:#555;font-weight:normal;">Stati...</div>
<div class="a tx" style="left:12.5px;top:169.38px;font-size:13.5px;line-height:15.08px;color:#5c5c5c">1</div>
<svg class="a" style="left:9.5px;top:187.0px" width="9" height="7" viewBox="0 0 9 7"><polygon points="5,0 6,2.5 8.8,2.6 6.6,4.3 7.4,7 5,5.4 2.6,7 3.4,4.3 1.2,2.6 4,2.5" fill="#666"/><path d="M0,3 H2 M0.5,5 H2.2" stroke="#888" stroke-width="0.7"/></svg>
<div class="a" style="left:24px;top:172.2px;width:33px;height:25px;border:1px solid #cfcfcf;background:#f7f7f7"></div>
<svg class="a" style="left:25px;top:173.2px" width="31" height="23" viewBox="0 0 100 75" preserveAspectRatio="none"><rect x="20" y="5" width="60" height="1.5" fill="#e8c8e0"/><circle cx="21" cy="33" r="12" fill="none" stroke="#f77fb0" stroke-width="1.8" opacity="1"/><circle cx="21" cy="33" r="8" fill="none" stroke="#f77fb0" stroke-width="1.8" opacity="1"/><circle cx="21" cy="33" r="4" fill="none" stroke="#f77fb0" stroke-width="1.8" opacity="1"/><line x1="55" y1="55" x2="92" y2="22" stroke="#9be3ea" stroke-width="2.5"/><line x1="72" y1="40" x2="88" y2="26" stroke="#ffe08a" stroke-width="2.5"/><polygon points="52,10 66,10 66,24" fill="#ffd24a"/><polygon points="49.6,11.399999999999999 72.6,34.4 49.6,57.4 26.6,34.4" fill="#000"/><rect x="38" y="30" width="4" height="4" fill="#3a3595"/><rect x="50" y="28" width="6" height="8" fill="#9cc"/><rect x="44" y="44" width="10" height="2.5" fill="#ffd24a"/><circle cx="35" cy="52" r="3" fill="#555"/><circle cx="38" cy="58" r="2.5" fill="#2ec4d0"/><rect x="70" y="42" width="9" height="3" fill="#e070c0"/></svg>
<div class="a tx" style="left:12.5px;top:210.68px;font-size:13.5px;line-height:15.08px;color:#c8502e">2</div>
<svg class="a" style="left:9.5px;top:228.3px" width="9" height="7" viewBox="0 0 9 7"><polygon points="5,0 6,2.5 8.8,2.6 6.6,4.3 7.4,7 5,5.4 2.6,7 3.4,4.3 1.2,2.6 4,2.5" fill="#666"/><path d="M0,3 H2 M0.5,5 H2.2" stroke="#888" stroke-width="0.7"/></svg>
<div class="a" style="left:22px;top:211.8px;width:37px;height:28.8px;border:3px solid #d24726;background:#fff"></div>
<svg class="a" style="left:25px;top:214.8px" width="31" height="22.8" viewBox="251 144 600 450" preserveAspectRatio="none"><use href="#slidecontent"/></svg>
<div class="a tx" style="left:12.5px;top:252.68px;font-size:13.5px;line-height:15.08px;color:#5c5c5c">3</div>
<svg class="a" style="left:9.5px;top:270.3px" width="9" height="7" viewBox="0 0 9 7"><polygon points="5,0 6,2.5 8.8,2.6 6.6,4.3 7.4,7 5,5.4 2.6,7 3.4,4.3 1.2,2.6 4,2.5" fill="#666"/><path d="M0,3 H2 M0.5,5 H2.2" stroke="#888" stroke-width="0.7"/></svg>
<div class="a" style="left:24px;top:255.5px;width:33px;height:25px;border:1px solid #cfcfcf;background:#ffd45e"></div>
<svg class="a" style="left:25px;top:256.5px" width="31" height="23" viewBox="0 0 100 75" preserveAspectRatio="none"><circle cx="16" cy="33" r="10" fill="none" stroke="#ff8a70" stroke-width="2.5" opacity="1"/><circle cx="16" cy="33" r="6" fill="none" stroke="#ff8a70" stroke-width="2.5" opacity="1"/><line x1="12" y1="62" x2="34" y2="44" stroke="#6a5ab0" stroke-width="1.8"/><polygon points="43,6 68,31 43,57" fill="#222"/><polygon points="43,14.0 80,14.0 84,16.3 80,18.6 43,18.6" fill="#00b2c2"/><polygon points="43,19.2 84,19.2 88,21.5 84,23.799999999999997 43,23.799999999999997" fill="#ffbb00"/><polygon points="43,24.4 88,24.4 92,26.7 88,29.0 43,29.0" fill="#ff8a00"/><polygon points="43,29.6 88,29.6 92,31.900000000000002 88,34.2 43,34.2" fill="#ff0066"/><polygon points="43,34.8 84,34.8 88,37.099999999999994 84,39.4 43,39.4" fill="#6a4fc0"/><polygon points="43,40.0 80,40.0 84,42.3 80,44.6 43,44.6" fill="#3a3595"/><polygon points="43,45.2 80,45.2 84,47.5 80,49.800000000000004 43,49.800000000000004" fill="#b0209a"/><polygon points="43,6 19,31 43,57" fill="#000"/><rect x="54" y="52" width="43" height="18" fill="#fff"/><rect x="54" y="50" width="43" height="2" fill="#6a5a30"/><rect x="57" y="56" width="37" height="3" fill="#6a7ab0"/><rect x="57" y="62" width="37" height="3" fill="#b080a0"/><rect x="54" y="70" width="43" height="1.5" fill="#555"/></svg>
<div class="a tx" style="left:12.5px;top:317.48px;font-size:13.5px;line-height:15.08px;color:#5c5c5c">4</div>
<div class="a" style="left:24px;top:320.3px;width:33px;height:25px;border:1px solid #cfcfcf;background:#f7f7f7"></div>
<svg class="a" style="left:25px;top:321.3px" width="31" height="23" viewBox="0 0 100 75" preserveAspectRatio="none"><rect x="20" y="5" width="60" height="1.5" fill="#e8c8e0"/><circle cx="21" cy="33" r="12" fill="none" stroke="#f77fb0" stroke-width="1.8" opacity="1"/><circle cx="21" cy="33" r="8" fill="none" stroke="#f77fb0" stroke-width="1.8" opacity="1"/><circle cx="21" cy="33" r="4" fill="none" stroke="#f77fb0" stroke-width="1.8" opacity="1"/><line x1="55" y1="55" x2="92" y2="22" stroke="#9be3ea" stroke-width="2.5"/><line x1="72" y1="40" x2="88" y2="26" stroke="#ffe08a" stroke-width="2.5"/><polygon points="52,10 66,10 66,24" fill="#ffd24a"/><polygon points="49.6,11.399999999999999 72.6,34.4 49.6,57.4 26.6,34.4" fill="#000"/><rect x="38" y="30" width="4" height="4" fill="#3a3595"/><rect x="50" y="28" width="6" height="8" fill="#9cc"/><rect x="44" y="44" width="10" height="2.5" fill="#ffd24a"/><circle cx="35" cy="52" r="3" fill="#555"/><circle cx="38" cy="58" r="2.5" fill="#2ec4d0"/><rect x="70" y="42" width="9" height="3" fill="#e070c0"/><rect x="60" y="7" width="35" height="17" rx="1.5" fill="#2e4f9a"/><rect x="63" y="10" width="5" height="4" fill="#e03060"/><rect x="70" y="10" width="22" height="2" fill="#c8d4f0"/><rect x="66" y="16" width="26" height="2" fill="#8aa2e0"/></svg>
<div class="a tx" style="left:12.5px;top:359.18px;font-size:13.5px;line-height:15.08px;color:#5c5c5c">5</div>
<svg class="a" style="left:9.5px;top:376.8px" width="9" height="7" viewBox="0 0 9 7"><polygon points="5,0 6,2.5 8.8,2.6 6.6,4.3 7.4,7 5,5.4 2.6,7 3.4,4.3 1.2,2.6 4,2.5" fill="#666"/><path d="M0,3 H2 M0.5,5 H2.2" stroke="#888" stroke-width="0.7"/></svg>
<div class="a" style="left:24px;top:362.0px;width:33px;height:25px;border:1px solid #cfcfcf;background:#f7f7f7"></div>
<svg class="a" style="left:25px;top:363.0px" width="31" height="23" viewBox="0 0 100 75" preserveAspectRatio="none"><rect x="8" y="11" width="8" height="2" fill="#ffbb00"/><rect x="18" y="11" width="8" height="2" fill="#3cb8c8"/><rect x="8" y="18" width="30" height="1.6" fill="#b0a8c8"/><rect x="8" y="22" width="30" height="1.6" fill="#b0a8c8"/><rect x="8" y="32.0" width="32" height="1.6" fill="#b8b0c8"/><rect x="8" y="35.5" width="32" height="1.6" fill="#b8b0c8"/><rect x="8" y="39.0" width="32" height="1.6" fill="#b8b0c8"/><rect x="8" y="42.5" width="32" height="1.6" fill="#b8b0c8"/><rect x="8" y="46.0" width="32" height="1.6" fill="#b8b0c8"/><line x1="40" y1="72" x2="98" y2="16" stroke="#ffd24a" stroke-width="2.5"/><line x1="70" y1="62" x2="98" y2="36" stroke="#9be3ea" stroke-width="2"/><circle cx="96" cy="32" r="4" fill="#2ec4d0"/><polygon points="68,10 89,31 68,52 47,31" fill="#111"/><rect x="58" y="28" width="20" height="1.5" fill="#888"/><rect x="60" y="33" width="16" height="1.5" fill="#6a70c0"/></svg>
<div class="a tx" style="left:12.5px;top:400.68px;font-size:13.5px;line-height:15.08px;color:#5c5c5c">6</div>
<svg class="a" style="left:9.5px;top:418.3px" width="9" height="7" viewBox="0 0 9 7"><polygon points="5,0 6,2.5 8.8,2.6 6.6,4.3 7.4,7 5,5.4 2.6,7 3.4,4.3 1.2,2.6 4,2.5" fill="#666"/><path d="M0,3 H2 M0.5,5 H2.2" stroke="#888" stroke-width="0.7"/></svg>
<div class="a" style="left:24px;top:403.5px;width:33px;height:25px;border:1px solid #cfcfcf;background:#f7f7f7"></div>
<svg class="a" style="left:25px;top:404.5px" width="31" height="23" viewBox="0 0 100 75" preserveAspectRatio="none"><line x1="2" y1="18" x2="58" y2="72" stroke="#ffd24a" stroke-width="2.5"/><line x1="2" y1="48" x2="20" y2="30" stroke="#9be3ea" stroke-width="2"/><circle cx="5" cy="44" r="4" fill="#2ec4d0"/><rect x="12" y="55" width="3" height="5" fill="#e070c0"/><polygon points="33,16 54,37 33,58 12,37" fill="#111"/><rect x="24" y="34" width="20" height="1.5" fill="#888"/><rect x="26" y="39" width="16" height="1.5" fill="#6a70c0"/><rect x="62" y="13" width="8" height="2" fill="#ffbb00"/><rect x="72" y="13" width="8" height="2" fill="#3cb8c8"/><rect x="62" y="20" width="30" height="1.6" fill="#b0a8c8"/><rect x="62" y="24" width="30" height="1.6" fill="#b0a8c8"/><rect x="62" y="34.0" width="32" height="1.6" fill="#b8b0c8"/><rect x="62" y="37.5" width="32" height="1.6" fill="#b8b0c8"/><rect x="62" y="41.0" width="32" height="1.6" fill="#b8b0c8"/><rect x="62" y="44.5" width="32" height="1.6" fill="#b8b0c8"/><rect x="62" y="48.0" width="32" height="1.6" fill="#b8b0c8"/><rect x="62" y="51.5" width="32" height="1.6" fill="#b8b0c8"/></svg>
<div class="a tx" style="left:12.5px;top:442.18px;font-size:13.5px;line-height:15.08px;color:#5c5c5c">7</div>
<div class="a" style="left:24px;top:445.0px;width:33px;height:25px;border:1px solid #cfcfcf;background:#fff"></div>
<svg class="a" style="left:25px;top:446.0px" width="31" height="23" viewBox="251 144 600 450" preserveAspectRatio="none"><use href="#slidecontent"/></svg>
<div class="a tx" style="left:12.5px;top:483.68px;font-size:13.5px;line-height:15.08px;color:#5c5c5c">8</div>
<svg class="a" style="left:9.5px;top:501.3px" width="9" height="7" viewBox="0 0 9 7"><polygon points="5,0 6,2.5 8.8,2.6 6.6,4.3 7.4,7 5,5.4 2.6,7 3.4,4.3 1.2,2.6 4,2.5" fill="#666"/><path d="M0,3 H2 M0.5,5 H2.2" stroke="#888" stroke-width="0.7"/></svg>
<div class="a" style="left:24px;top:486.5px;width:33px;height:25px;border:1px solid #cfcfcf;background:#ffd45e"></div>
<svg class="a" style="left:25px;top:487.5px" width="31" height="23" viewBox="0 0 100 75" preserveAspectRatio="none"><circle cx="16" cy="33" r="10" fill="none" stroke="#ff8a70" stroke-width="2.5" opacity="1"/><circle cx="16" cy="33" r="6" fill="none" stroke="#ff8a70" stroke-width="2.5" opacity="1"/><line x1="12" y1="62" x2="34" y2="44" stroke="#6a5ab0" stroke-width="1.8"/><polygon points="43,6 68,31 43,57" fill="#222"/><polygon points="43,14.0 80,14.0 84,16.3 80,18.6 43,18.6" fill="#00b2c2"/><polygon points="43,19.2 84,19.2 88,21.5 84,23.799999999999997 43,23.799999999999997" fill="#ffbb00"/><polygon points="43,24.4 88,24.4 92,26.7 88,29.0 43,29.0" fill="#ff8a00"/><polygon points="43,29.6 88,29.6 92,31.900000000000002 88,34.2 43,34.2" fill="#ff0066"/><polygon points="43,34.8 84,34.8 88,37.099999999999994 84,39.4 43,39.4" fill="#6a4fc0"/><polygon points="43,40.0 80,40.0 84,42.3 80,44.6 43,44.6" fill="#3a3595"/><polygon points="43,45.2 80,45.2 84,47.5 80,49.800000000000004 43,49.800000000000004" fill="#b0209a"/><polygon points="43,6 19,31 43,57" fill="#000"/><rect x="54" y="52" width="43" height="18" fill="#fff"/><rect x="54" y="50" width="43" height="2" fill="#6a5a30"/><rect x="57" y="56" width="37" height="3" fill="#6a7ab0"/><rect x="57" y="62" width="37" height="3" fill="#b080a0"/><rect x="54" y="70" width="43" height="1.5" fill="#555"/></svg>
<div class="a tx" style="left:12.5px;top:525.18px;font-size:13.5px;line-height:15.08px;color:#5c5c5c">9</div>
<div class="a" style="left:24px;top:528.0px;width:33px;height:25px;border:1px solid #cfcfcf;background:#f7f7f7"></div>
<svg class="a" style="left:25px;top:529.0px" width="31" height="23" viewBox="0 0 100 75" preserveAspectRatio="none"><rect x="0" y="42" width="100" height="33" fill="#ececf0"/><line x1="55" y1="46" x2="95" y2="6" stroke="#ffd24a" stroke-width="2.5"/><line x1="62" y1="46" x2="98" y2="12" stroke="#9be3ea" stroke-width="2"/><circle cx="28" cy="26" r="7" fill="none" stroke="#f0a0d0" stroke-width="1.5" opacity="1"/><line x1="32" y1="42" x2="48" y2="28" stroke="#6a5ab0" stroke-width="1.8"/><polygon points="52,3 70,21 52,39 34,21" fill="#151515"/><rect x="45" y="18" width="3" height="3" fill="#c08030"/><rect x="52" y="20" width="4" height="3" fill="#4080c0"/><rect x="8" y="33" width="6" height="2" fill="#ffbb00"/><rect x="18" y="33" width="6" height="2" fill="#3cb8c8"/><rect x="8" y="50" width="22" height="1.6" fill="#cdc8d4"/><rect x="8" y="54" width="22" height="1.6" fill="#cdc8d4"/><rect x="8" y="58" width="22" height="1.6" fill="#cdc8d4"/><rect x="8" y="62" width="22" height="1.6" fill="#cdc8d4"/><rect x="40" y="50" width="22" height="1.6" fill="#cdc8d4"/><rect x="40" y="54" width="22" height="1.6" fill="#cdc8d4"/><rect x="40" y="58" width="22" height="1.6" fill="#cdc8d4"/><rect x="40" y="62" width="22" height="1.6" fill="#cdc8d4"/><rect x="72" y="50" width="22" height="1.6" fill="#cdc8d4"/><rect x="72" y="54" width="22" height="1.6" fill="#cdc8d4"/><rect x="72" y="58" width="22" height="1.6" fill="#cdc8d4"/><rect x="72" y="62" width="22" height="1.6" fill="#cdc8d4"/></svg>
<div class="a tx" style="left:5.5px;top:566.68px;font-size:13.5px;line-height:15.08px;color:#5c5c5c">10</div>
<div class="a" style="left:24px;top:569.5px;width:33px;height:25px;border:1px solid #cfcfcf;background:#f7f7f7"></div>
<svg class="a" style="left:25px;top:570.5px" width="31" height="23" viewBox="0 0 100 75" preserveAspectRatio="none"><rect x="0" y="42" width="100" height="33" fill="#ececf0"/><line x1="55" y1="46" x2="95" y2="6" stroke="#ffd24a" stroke-width="2.5"/><line x1="62" y1="46" x2="98" y2="12" stroke="#9be3ea" stroke-width="2"/><circle cx="28" cy="26" r="7" fill="none" stroke="#f0a0d0" stroke-width="1.5" opacity="1"/><line x1="32" y1="42" x2="48" y2="28" stroke="#6a5ab0" stroke-width="1.8"/><polygon points="52,3 70,21 52,39 34,21" fill="#151515"/><rect x="45" y="18" width="3" height="3" fill="#c08030"/><rect x="52" y="20" width="4" height="3" fill="#4080c0"/><rect x="8" y="33" width="6" height="2" fill="#ffbb00"/><rect x="18" y="33" width="6" height="2" fill="#3cb8c8"/><rect x="20" y="50" width="62" height="1.6" fill="#c8c2cc"/><rect x="20" y="54" width="62" height="1.6" fill="#c8c2cc"/><rect x="20" y="58" width="62" height="1.6" fill="#c8c2cc"/><rect x="20" y="62" width="62" height="1.6" fill="#c8c2cc"/><rect x="20" y="66" width="62" height="1.6" fill="#c8c2cc"/></svg>
<div class="a" style="left:93px;top:135px;width:915px;height:469px;background:#e6e6e6;"></div>
<div class="a" style="left:93px;top:604px;width:915px;height:1px;background:#d0d0d0;"></div>
<div class="a" style="left:1009px;top:137px;width:12.8px;height:417px;background:#dcdcdc;"></div>
<div class="a" style="left:1009px;top:137px;width:12.8px;height:12.8px;background:#fff;border:1px solid #c6c6c6"></div>
<svg class="a" style="left:1012px;top:141.5px" width="7" height="4" viewBox="0 0 7 4"><polygon points="0,4 7,4 3.5,0" fill="#606060"/></svg>
<div class="a" style="left:1009px;top:185.5px;width:12.8px;height:35px;background:#fff;border:1px solid #c6c6c6"></div>
<div class="a" style="left:1009px;top:541.5px;width:12.8px;height:12.8px;background:#fff;border:1px solid #c6c6c6"></div>
<svg class="a" style="left:1012px;top:546px" width="7" height="4" viewBox="0 0 7 4"><polygon points="0,0 7,0 3.5,4" fill="#606060"/></svg>
<svg class="a" style="left:1012.3px;top:559px" width="7" height="7.5" viewBox="0 0 7 7.5"><polygon points="0,3.5 7,3.5 3.5,0" fill="#666"/><polygon points="0,7.5 7,7.5 3.5,4" fill="#666"/></svg>
<svg class="a" style="left:1012.3px;top:574.5px" width="7" height="7.5" viewBox="0 0 7 7.5"><polygon points="0,0 7,0 3.5,3.5" fill="#666"/><polygon points="0,4 7,4 3.5,7.5" fill="#666"/></svg>
<div class="a" style="left:250px;top:143px;width:602px;height:451px;background:#fff;border:1px solid #c4c4c4"></div>
<svg class="a" style="left:251px;top:144px" width="600" height="450" viewBox="251 144 600 450">
<defs>
<linearGradient id="bg" x1="0" y1="0" x2="0.75" y2="1"><stop offset="0" stop-color="#eeeeee"/><stop offset="0.65" stop-color="#fdfdfd"/><stop offset="1" stop-color="#f9f9f9"/></linearGradient>
<linearGradient id="dk" x1="0" y1="0" x2="0" y2="1"><stop offset="0" stop-color="#525252"/><stop offset="0.5" stop-color="#2f2f2f"/><stop offset="1" stop-color="#080808"/></linearGradient>
</defs>
<g id="slidecontent"><rect x="251" y="144" width="600" height="450" fill="url(#bg)"/>
<circle cx="341" cy="342.5" r="82.6" fill="none" stroke="#f5096a" stroke-width="2.6"/>
<circle cx="341" cy="342.5" r="68.4" fill="none" stroke="#f5096a" stroke-width="2.6"/>
<circle cx="341" cy="342.5" r="54.8" fill="none" stroke="#f5096a" stroke-width="2.6"/>
<circle cx="341" cy="342.5" r="41.2" fill="none" stroke="#f5096a" stroke-width="2.6"/>
<circle cx="341" cy="342.5" r="27.8" fill="none" stroke="#f5096a" stroke-width="2.6"/>
<circle cx="341" cy="342.5" r="15.2" fill="none" stroke="#f5096a" stroke-width="2.6"/>
<circle cx="341" cy="342.5" r="3.3" fill="none" stroke="#f5096a" stroke-width="2.6"/>
<rect x="283" y="249.5" width="13" height="3.6" fill="#234e89"/>
<rect x="299" y="249.5" width="82" height="3.6" fill="#234e89"/>
<g transform="translate(365.1 229.7) rotate(45)"><rect x="-14.5" y="-4.3" width="29" height="8.6" fill="#234e89"/><rect x="-4.3" y="-14.5" width="8.6" height="29" fill="#234e89"/></g>
<polygon points="387.2,217.3 387.2,252.6 421.2,252.6" fill="#ffbb00"/>
<rect x="388.3" y="244" width="20" height="2.6" fill="#000"/>
<rect x="411.8" y="244" width="9" height="2.6" fill="#000"/>
<polygon points="383.6,170.4 393.9,170.4 383.6,178.8" fill="#000"/>
<polygon points="396.8,170.4 406.4,170.4 396.8,179.5" fill="#000"/>
<polygon points="383.6,182.3 393.9,182.3 383.6,192.7" fill="#000"/>
<line x1="399.5" y1="200.7" x2="419.4" y2="219.8" stroke="#000" stroke-width="2.4"/>
<circle cx="428.2" cy="229.4" r="11.2" fill="none" stroke="#a4208d" stroke-width="4.8"/>
<circle cx="428.2" cy="229.4" r="6.3" fill="none" stroke="#234e89" stroke-width="3"/>
<line x1="450.5" y1="225.4" x2="499.2" y2="179.9" stroke="#000" stroke-width="2.6"/>
<line x1="501.6" y1="176" x2="510.3" y2="168.8" stroke="#000" stroke-width="2.6"/>
<line x1="300.5" y1="538" x2="425" y2="414.5" stroke="#3a3595" stroke-width="7.3"/>
<line x1="372.5" y1="488" x2="432" y2="428" stroke="#7a8ca0" stroke-width="6.2"/>
<polygon points="434,454.6 434,490 398.9,490" fill="#00b2c2"/>
<line x1="412.4" y1="560.2" x2="492" y2="481" stroke="#ffbb00" stroke-width="6.5"/>
<line x1="476.2" y1="522" x2="502" y2="496" stroke="#00b2c2" stroke-width="6"/>
<polygon points="322.0,442.8 329.6,442.8 322.0,449.8" fill="#000"/>
<polygon points="332.4,442.8 340.1,442.8 332.4,449.8" fill="#000"/>
<polygon points="342.9,442.8 350.5,442.8 342.9,449.8" fill="#000"/>
<polygon points="353.4,442.8 361.0,442.8 353.4,449.8" fill="#000"/>
<polygon points="363.8,442.8 371.4,442.8 363.8,449.8" fill="#000"/>
<polygon points="322.0,452.8 329.6,452.8 322.0,459.8" fill="#000"/>
<polygon points="332.4,452.8 340.1,452.8 332.4,459.8" fill="#000"/>
<polygon points="342.9,452.8 350.5,452.8 342.9,459.8" fill="#000"/>
<polygon points="353.4,452.8 361.0,452.8 353.4,459.8" fill="#000"/>
<polygon points="322.0,462.7 329.6,462.7 322.0,469.7" fill="#000"/>
<polygon points="332.4,462.7 340.1,462.7 332.4,469.7" fill="#000"/>
<polygon points="342.9,462.7 350.5,462.7 342.9,469.7" fill="#000"/>
<polygon points="322.0,472.7 329.6,472.7 322.0,479.7" fill="#000"/>
<polygon points="332.4,472.7 340.1,472.7 332.4,479.7" fill="#000"/>
<polygon points="322.0,482.6 329.6,482.6 322.0,489.6" fill="#000"/>
<line x1="342.3" y1="479.5" x2="364.3" y2="458" stroke="#000" stroke-width="3.3"/>
<line x1="369" y1="453.7" x2="378.2" y2="444.6" stroke="#000" stroke-width="3.3"/>
<circle cx="466.7" cy="529.5" r="5" fill="none" stroke="#000" stroke-width="2.4"/>
<rect x="481.2" y="526.3" width="5" height="6.5" fill="#000"/>
<rect x="493.9" y="526.3" width="5" height="6.5" fill="#000"/>
<rect x="506.7" y="526.3" width="5" height="6.5" fill="#000"/>
<polygon points="513,171.5 685.5,343 513,514.4" fill="url(#dk)"/>
<polygon points="513,171.5 341,342.8 513,514.4" fill="#000"/>
<polygon points="513,244.3 756.5,244.3 791.5,277.5 513,277.5" fill="#00b2c2"/>
<polygon points="512.5,298.8 802,298.8 836,331.5 512.5,331.5" fill="#ffbb00"/>
<polygon points="513,353.3 836,353.3 802,384.3 513,384.3" fill="#ff0066"/>
<polygon points="513,404.9 790.5,404.9 756.5,436 513,436" fill="#3a3595"/>
<text x="439.8" y="269.2" fill="#fff" font-family="Liberation Sans" font-size="16.6" letter-spacing="2.75" stroke="#fff" stroke-width="0.5">Point1</text>
<text x="439.8" y="322.7" fill="#fff" font-family="Liberation Sans" font-size="16.6" letter-spacing="2.75" stroke="#fff" stroke-width="0.5">Point2</text>
<text x="439.8" y="374.5" fill="#fff" font-family="Liberation Sans" font-size="16.6" letter-spacing="2.75" stroke="#fff" stroke-width="0.5">Point3</text>
<text x="439.8" y="427.1" fill="#fff" font-family="Liberation Sans" font-size="16.6" letter-spacing="2.75" stroke="#fff" stroke-width="0.5">Point4</text>
<text x="528" y="257.8" fill="#0f5c68" font-family="Liberation Sans" font-weight="bold" font-size="11.3" textLength="207" lengthAdjust="spacingAndGlyphs">Lorem ipsum dolor sit amet, consectetuer</text>
<polyline points="640.2,260.0 641.7,261.2 643.2,260.0 644.7,261.2 646.2,260.0 647.7,261.2 649.2,260.0 650.7,261.2 652.2,260.0 653.7,261.2 655.2,260.0 656.7,261.2 658.2,260.0 659.7,261.2 661.2,260.0 662.7,261.2 664.2,260.0 665.7,261.2" fill="none" stroke="#e8262a" stroke-width="0.75"/>
<polyline points="670.2,260.0 671.7,261.2 673.2,260.0 674.7,261.2 676.2,260.0 677.7,261.2 679.2,260.0 680.7,261.2 682.2,260.0 683.7,261.2 685.2,260.0 686.7,261.2 688.2,260.0 689.7,261.2 691.2,260.0 692.7,261.2 694.2,260.0 695.7,261.2 697.2,260.0 698.7,261.2 700.2,260.0 701.7,261.2 703.2,260.0 704.7,261.2 706.2,260.0 707.7,261.2 709.2,260.0 710.7,261.2 712.2,260.0 713.7,261.2 715.2,260.0 716.7,261.2 718.2,260.0 719.7,261.2 721.2,260.0 722.7,261.2 724.2,260.0 725.7,261.2 727.2,260.0 728.7,261.2 730.2,260.0 731.7,261.2 733.2,260.0" fill="none" stroke="#e8262a" stroke-width="0.75"/>
<text x="528" y="268.8" fill="#0f5c68" font-family="Liberation Sans" font-weight="bold" font-size="11.3" textLength="169" lengthAdjust="spacingAndGlyphs">adipiscing elit. Example Text Here.</text>
<polyline points="528.0,271.0 529.5,272.2 531.0,271.0 532.5,272.2 534.0,271.0 535.5,272.2 537.0,271.0 538.5,272.2 540.0,271.0 541.5,272.2 543.0,271.0 544.5,272.2 546.0,271.0 547.5,272.2 549.0,271.0 550.5,272.2 552.0,271.0 553.5,272.2 555.0,271.0 556.5,272.2 558.0,271.0 559.5,272.2 561.0,271.0 562.5,272.2 564.0,271.0 565.5,272.2 567.0,271.0 568.5,272.2 570.0,271.0 571.5,272.2 573.0,271.0 574.5,272.2 576.0,271.0 577.5,272.2" fill="none" stroke="#e8262a" stroke-width="0.75"/>
<polyline points="581.9,271.0 583.4,272.2 584.9,271.0 586.4,272.2 587.9,271.0 589.4,272.2 590.9,271.0 592.4,272.2 593.9,271.0 595.4,272.2 596.9,271.0 598.4,272.2" fill="none" stroke="#e8262a" stroke-width="0.75"/>
<text x="531" y="311.3" fill="#6b5200" font-family="Liberation Sans" font-weight="bold" font-size="11.3" textLength="259" lengthAdjust="spacingAndGlyphs">Lorem ipsum dolor sit amet, consectetuer adipiscing</text>
<polyline points="642.2,313.5 643.7,314.7 645.2,313.5 646.7,314.7 648.2,313.5 649.7,314.7 651.2,313.5 652.7,314.7 654.2,313.5 655.7,314.7 657.2,313.5 658.7,314.7 660.2,313.5 661.7,314.7 663.2,313.5 664.7,314.7 666.2,313.5 667.7,314.7" fill="none" stroke="#e8262a" stroke-width="0.75"/>
<polyline points="672.0,313.5 673.5,314.7 675.0,313.5 676.5,314.7 678.0,313.5 679.5,314.7 681.0,313.5 682.5,314.7 684.0,313.5 685.5,314.7 687.0,313.5 688.5,314.7 690.0,313.5 691.5,314.7 693.0,313.5 694.5,314.7 696.0,313.5 697.5,314.7 699.0,313.5 700.5,314.7 702.0,313.5 703.5,314.7 705.0,313.5 706.5,314.7 708.0,313.5 709.5,314.7 711.0,313.5 712.5,314.7 714.0,313.5 715.5,314.7 717.0,313.5 718.5,314.7 720.0,313.5 721.5,314.7 723.0,313.5 724.5,314.7 726.0,313.5 727.5,314.7 729.0,313.5 730.5,314.7 732.0,313.5 733.5,314.7 735.0,313.5" fill="none" stroke="#e8262a" stroke-width="0.75"/>
<polyline points="739.0,313.5 740.5,314.7 742.0,313.5 743.5,314.7 745.0,313.5 746.5,314.7 748.0,313.5 749.5,314.7 751.0,313.5 752.5,314.7 754.0,313.5 755.5,314.7 757.0,313.5 758.5,314.7 760.0,313.5 761.5,314.7 763.0,313.5 764.5,314.7 766.0,313.5 767.5,314.7 769.0,313.5 770.5,314.7 772.0,313.5 773.5,314.7 775.0,313.5 776.5,314.7 778.0,313.5 779.5,314.7 781.0,313.5 782.5,314.7 784.0,313.5 785.5,314.7 787.0,313.5 788.5,314.7" fill="none" stroke="#e8262a" stroke-width="0.75"/>
<text x="531" y="322.3" fill="#6b5200" font-family="Liberation Sans" font-weight="bold" font-size="11.3" textLength="117" lengthAdjust="spacingAndGlyphs">elit. Example Text Here.</text>
<polyline points="531.0,324.5 532.5,325.7 534.0,324.5 535.5,325.7 537.0,324.5 538.5,325.7 540.0,324.5 541.5,325.7 543.0,324.5 544.5,325.7 546.0,324.5 547.5,325.7" fill="none" stroke="#e8262a" stroke-width="0.75"/>
<text x="531" y="366.3" fill="#66082f" font-family="Liberation Sans" font-weight="bold" font-size="11.3" textLength="281" lengthAdjust="spacingAndGlyphs">Lorem ipsum dolor sit amet, consectetuer adipiscing elit.</text>
<polyline points="642.7,368.5 644.2,369.7 645.7,368.5 647.2,369.7 648.7,368.5 650.2,369.7 651.7,368.5 653.2,369.7 654.7,368.5 656.2,369.7 657.7,368.5 659.2,369.7 660.7,368.5 662.2,369.7 663.7,368.5 665.2,369.7 666.7,368.5 668.2,369.7" fill="none" stroke="#e8262a" stroke-width="0.75"/>
<polyline points="672.6,368.5 674.1,369.7 675.6,368.5 677.1,369.7 678.6,368.5 680.1,369.7 681.6,368.5 683.1,369.7 684.6,368.5 686.1,369.7 687.6,368.5 689.1,369.7 690.6,368.5 692.1,369.7 693.6,368.5 695.1,369.7 696.6,368.5 698.1,369.7 699.6,368.5 701.1,369.7 702.6,368.5 704.1,369.7 705.6,368.5 707.1,369.7 708.6,368.5 710.1,369.7 711.6,368.5 713.1,369.7 714.6,368.5 716.1,369.7 717.6,368.5 719.1,369.7 720.6,368.5 722.1,369.7 723.6,368.5 725.1,369.7 726.6,368.5 728.1,369.7 729.6,368.5 731.1,369.7 732.6,368.5 734.1,369.7 735.6,368.5" fill="none" stroke="#e8262a" stroke-width="0.75"/>
<polyline points="740.0,368.5 741.5,369.7 743.0,368.5 744.5,369.7 746.0,368.5 747.5,369.7 749.0,368.5 750.5,369.7 752.0,368.5 753.5,369.7 755.0,368.5 756.5,369.7 758.0,368.5 759.5,369.7 761.0,368.5 762.5,369.7 764.0,368.5 765.5,369.7 767.0,368.5 768.5,369.7 770.0,368.5 771.5,369.7 773.0,368.5 774.5,369.7 776.0,368.5 777.5,369.7 779.0,368.5 780.5,369.7 782.0,368.5 783.5,369.7 785.0,368.5 786.5,369.7 788.0,368.5 789.5,369.7" fill="none" stroke="#e8262a" stroke-width="0.75"/>
<polyline points="794.2,368.5 795.7,369.7 797.2,368.5 798.7,369.7 800.2,368.5 801.7,369.7 803.2,368.5 804.7,369.7 806.2,368.5 807.7,369.7 809.2,368.5 810.7,369.7" fill="none" stroke="#e8262a" stroke-width="0.75"/>
<text x="531" y="377.5" fill="#66082f" font-family="Liberation Sans" font-weight="bold" font-size="11.3" textLength="92" lengthAdjust="spacingAndGlyphs">Example Text Here.</text>
<text x="531" y="417.8" fill="#f0f0fa" font-family="Liberation Sans" font-weight="bold" font-size="11.3" textLength="207.7" lengthAdjust="spacingAndGlyphs">Lorem ipsum dolor sit amet, consectetuer</text>
<polyline points="643.5,420.0 645.0,421.2 646.5,420.0 648.0,421.2 649.5,420.0 651.0,421.2 652.5,420.0 654.0,421.2 655.5,420.0 657.0,421.2 658.5,420.0 660.0,421.2 661.5,420.0 663.0,421.2 664.5,420.0 666.0,421.2 667.5,420.0 669.0,421.2" fill="none" stroke="#e8262a" stroke-width="0.75"/>
<polyline points="673.7,420.0 675.2,421.2 676.7,420.0 678.2,421.2 679.7,420.0 681.2,421.2 682.7,420.0 684.2,421.2 685.7,420.0 687.2,421.2 688.7,420.0 690.2,421.2 691.7,420.0 693.2,421.2 694.7,420.0 696.2,421.2 697.7,420.0 699.2,421.2 700.7,420.0 702.2,421.2 703.7,420.0 705.2,421.2 706.7,420.0 708.2,421.2 709.7,420.0 711.2,421.2 712.7,420.0 714.2,421.2 715.7,420.0 717.2,421.2 718.7,420.0 720.2,421.2 721.7,420.0 723.2,421.2 724.7,420.0 726.2,421.2 727.7,420.0 729.2,421.2 730.7,420.0 732.2,421.2 733.7,420.0 735.2,421.2 736.7,420.0" fill="none" stroke="#e8262a" stroke-width="0.75"/>
<text x="531" y="428.8" fill="#f0f0fa" font-family="Liberation Sans" font-weight="bold" font-size="11.3" textLength="169.6" lengthAdjust="spacingAndGlyphs">adipiscing elit. Example Text Here.</text>
<polyline points="531.0,431.0 532.5,432.2 534.0,431.0 535.5,432.2 537.0,431.0 538.5,432.2 540.0,431.0 541.5,432.2 543.0,431.0 544.5,432.2 546.0,431.0 547.5,432.2 549.0,431.0 550.5,432.2 552.0,431.0 553.5,432.2 555.0,431.0 556.5,432.2 558.0,431.0 559.5,432.2 561.0,431.0 562.5,432.2 564.0,431.0 565.5,432.2 567.0,431.0 568.5,432.2 570.0,431.0 571.5,432.2 573.0,431.0 574.5,432.2 576.0,431.0 577.5,432.2 579.0,431.0 580.5,432.2" fill="none" stroke="#e8262a" stroke-width="0.75"/>
<polyline points="585.1,431.0 586.6,432.2 588.1,431.0 589.6,432.2 591.1,431.0 592.6,432.2 594.1,431.0 595.6,432.2 597.1,431.0 598.6,432.2 600.1,431.0 601.6,432.2" fill="none" stroke="#e8262a" stroke-width="0.75"/>
<text x="397.5" y="583.2" font-family="Liberation Sans" font-weight="bold" font-size="13.3" letter-spacing="5.75" fill="#111">(<tspan fill="#ff0000">NOTE</tspan>:ANIMATED 4 POINT)</text>
</g></svg>
<div class="a" style="left:0px;top:607px;width:1024px;height:20px;background:#f3f3f3;"></div>
<div class="a" style="left:0px;top:606.5px;width:1024px;height:1px;background:#dedede;"></div>
<div class="a" style="left:0px;top:626px;width:1024px;height:1px;background:#b7472a;"></div>
<div class="a" style="left:0px;top:606px;width:1px;height:21px;background:#b7472a;"></div>
<div class="a" style="left:1022.5px;top:606px;width:1.5px;height:21px;background:#b7472a;"></div>
<div class="a tx" style="left:8.2px;top:611.45px;font-size:10px;line-height:11.17px;color:#555;font-weight:normal;transform-origin:0 0;transform:scaleX(0.9953)">Slide 2 of 11</div>
<svg class="a" style="left:79.5px;top:610px" width="13" height="13" viewBox="0 0 13 13"><path d="M5.5,0.5 H0.5 V10.5 H5.5" fill="none" stroke="#666" stroke-width="1"/><path d="M5.8,0.5 V12" stroke="#777" stroke-width="1.2"/><path d="M6,0.5 H12 M6,10.5 H12" stroke="#666" stroke-width="1"/><path d="M7.5,3 L11.5,8 M11.5,3 L7.5,8" stroke="#555" stroke-width="1.3"/></svg>
<div class="a tx" style="left:107.8px;top:611.45px;font-size:10px;line-height:11.17px;color:#555;font-weight:normal;transform-origin:0 0;transform:scaleX(0.9924)">English (United States)</div>
<svg class="a" style="left:565px;top:611px" width="11" height="11" viewBox="0 0 11 11"><path d="M0,10.5 H10.5 M0,8 H10.5 M1.5,5.5 H9 M3.5,3 H7" stroke="#777" stroke-width="1"/><polygon points="3.3,2.6 7.3,2.6 5.3,0" fill="#777"/></svg>
<div class="a tx" style="left:579.5px;top:611.25px;font-size:10px;line-height:11.17px;color:#555;font-weight:normal;transform-origin:0 0;transform:scaleX(0.9876)">Notes</div>
<svg class="a" style="left:624.5px;top:611.2px" width="11" height="10.5" viewBox="0 0 11 10.5"><path d="M0,0 H10.7 V7.5 H5 L2.5,10.3 V7.5 H0 Z" fill="#6a6a6a"/></svg>
<div class="a tx" style="left:639.1px;top:611.25px;font-size:10px;line-height:11.17px;color:#555;font-weight:normal;transform-origin:0 0;transform:scaleX(0.9698)">Comments</div>
<div class="a" style="left:703.5px;top:607px;width:32.3px;height:19px;background:#d3d3d3;"></div>
<svg class="a" style="left:713px;top:610px" width="13.5" height="12" viewBox="0 0 13.5 12"><rect x="0.5" y="0.5" width="12.5" height="11" fill="none" stroke="#555" stroke-width="1"/><rect x="3" y="0.5" width="1" height="11" fill="#555"/><rect x="5.5" y="2.5" width="5.5" height="4.5" fill="none" stroke="#555" stroke-width="0.9"/></svg>
<svg class="a" style="left:747px;top:610px" width="13" height="12" viewBox="0 0 13 12"><rect x="0.5" y="0.5" width="4.5" height="4.2" fill="none" stroke="#666" stroke-width="0.9"/><rect x="7.5" y="0.5" width="4.5" height="4.2" fill="none" stroke="#666" stroke-width="0.9"/><rect x="0.5" y="7" width="4.5" height="4.2" fill="none" stroke="#666" stroke-width="0.9"/><rect x="7.5" y="7" width="4.5" height="4.2" fill="none" stroke="#666" stroke-width="0.9"/></svg>
<svg class="a" style="left:780.5px;top:610.4px" width="12" height="10.5" viewBox="0 0 12 10.5"><path d="M0.5,0.5 H5 L6,1.5 L7,0.5 H11.5 V10 H7 L6,10.5 L5,10 H0.5 Z M6,1.5 V10" fill="none" stroke="#666" stroke-width="0.9"/><path d="M2,3.5 H4.5 M2,5.5 H4.5 M2,7.5 H4.5 M7.5,3.5 H10 M7.5,5.5 H10 M7.5,7.5 H10" stroke="#666" stroke-width="0.8"/></svg>
<svg class="a" style="left:814px;top:610.4px" width="12" height="11" viewBox="0 0 12 11"><rect x="0" y="0" width="12" height="1.6" fill="#666"/><path d="M1.5,1.6 V6.5 H10.5 V1.6" fill="none" stroke="#666" stroke-width="0.9"/><path d="M6,6.5 V10.5 M3.5,10.5 H8.5" stroke="#666" stroke-width="1"/></svg>
<div class="a" style="left:841.2px;top:615.5px;width:5px;height:1.6px;background:#555;"></div>
<div class="a" style="left:850.2px;top:616px;width:87.6px;height:1px;background:#b4b4b4;"></div>
<div class="a" style="left:879px;top:611.2px;width:4px;height:9.6px;background:#555;"></div>
<div class="a" style="left:894.3px;top:613.5px;width:1px;height:5.5px;background:#aaa;"></div>
<svg class="a" style="left:942.5px;top:612.5px" width="7" height="7" viewBox="0 0 7 7"><path d="M3.5,0 V7 M0,3.5 H7" stroke="#555" stroke-width="1.5"/></svg>
<div class="a tx" style="left:963.6px;top:611.25px;font-size:10px;line-height:11.17px;color:#555;font-weight:normal;transform-origin:0 0;transform:scaleX(0.9036)">71 %</div>
<svg class="a" style="left:995.8px;top:610.4px" width="11.6" height="12.2" viewBox="0 0 11.6 12.2"><rect x="0.5" y="0.5" width="10.6" height="11.2" fill="none" stroke="#666" stroke-width="1"/><path d="M3,3 L5,5 M3,3 V4.8 M3,3 H4.8 M8.6,3 L6.6,5 M8.6,3 V4.8 M8.6,3 H6.8 M3,9.2 L5,7.2 M3,9.2 V7.4 M3,9.2 H4.8 M8.6,9.2 L6.6,7.2 M8.6,9.2 V7.4 M8.6,9.2 H6.8" fill="none" stroke="#555" stroke-width="0.9"/></svg>

</body></html>
